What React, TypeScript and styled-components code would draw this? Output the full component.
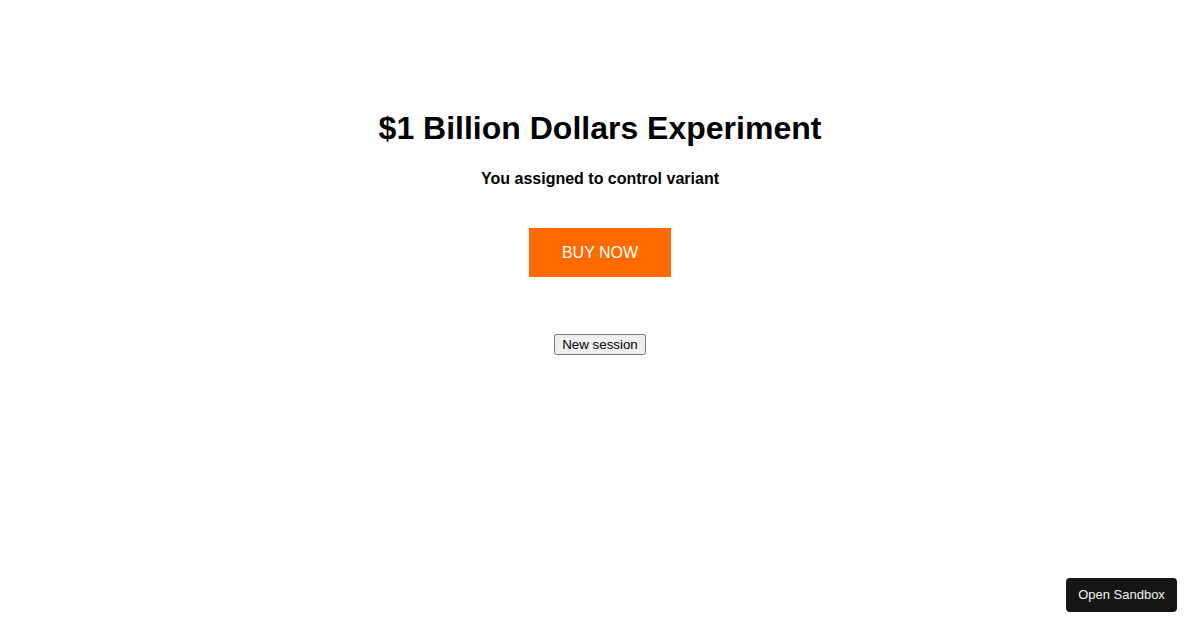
import styled, { createGlobalStyle } from "styled-components";

const GlobalStyle = createGlobalStyle`
  html, body {
    margin: 0;
    padding: 0;
    background: #fff;
    font-family: "Liberation Sans", Arial, sans-serif;
    color: #000;
  }
`;

const Page = styled.main`
  display: flex;
  flex-direction: column;
  align-items: center;
  padding-top: 110px;
  min-height: 630px;
  box-sizing: border-box;
`;

const Title = styled.h1`
  margin: 0;
  font-size: 32px;
  line-height: 37px;
  font-weight: 700;
`;

const Subtitle = styled.h3`
  margin: 23px 0 0;
  font-size: 16px;
  line-height: 18px;
  font-weight: 700;
`;

const BuyButton = styled.button`
  margin-top: 40px;
  padding: 15px 33px;
  border: none;
  background: #ff6a00;
  color: #fff;
  font-family: "Liberation Sans", Arial, sans-serif;
  font-size: 16px;
  line-height: 19px;
  cursor: pointer;
`;

const SessionButton = styled.button`
  margin-top: 57px;
  font-family: "Liberation Sans", Arial, sans-serif;
  font-size: 13.33px;
`;

const SandboxLink = styled.a`
  position: fixed;
  right: 23px;
  bottom: 18px;
  display: flex;
  align-items: center;
  justify-content: center;
  width: 111px;
  height: 34px;
  padding-bottom: 2px;
  box-sizing: border-box;
  border-radius: 4px;
  background: #151515;
  color: #f2f2f2;
  font-family: "Liberation Sans", Arial, sans-serif;
  font-size: 13px;
  text-decoration: none;
`;

export default function App() {
  return (
    <>
      <GlobalStyle />
      <Page>
        <Title>$1 Billion Dollars Experiment</Title>
        <Subtitle>You assigned to control variant</Subtitle>
        <BuyButton>BUY NOW</BuyButton>
        <SessionButton>New session</SessionButton>
      </Page>
      <SandboxLink href="#">Open Sandbox</SandboxLink>
    </>
  );
}
